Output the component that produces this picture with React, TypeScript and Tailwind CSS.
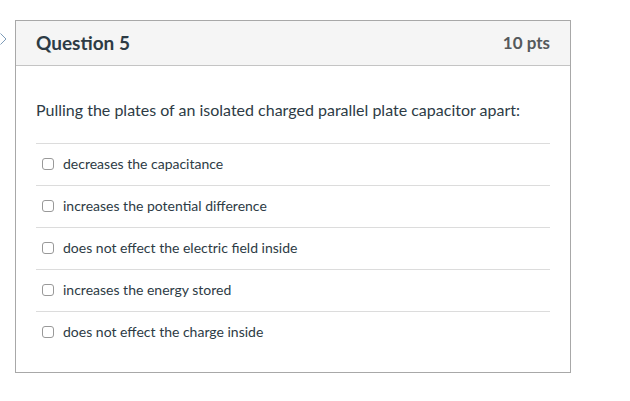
const ANSWERS = [
  "decreases the capacitance",
  "increases the potential difference",
  "does not effect the electric field inside",
  "increases the energy stored",
  "does not effect the charge inside",
];

export default function App() {
  return (
    <div
      className="relative w-[630px] h-[401px] bg-white text-[#2d3b45]"
      style={{ fontFamily: "Lato, 'Liberation Sans', sans-serif" }}
    >
      <svg
        className="absolute left-0 top-[33px]"
        width="7"
        height="12"
        viewBox="0 0 7 12"
      >
        <path d="M0.5 0.5 L6 6 L0.5 11.5" fill="none" stroke="#7d9bb8" strokeWidth="1" />
      </svg>
      <div className="absolute left-[15px] top-[20px] w-[556px] border border-[#a8a8a8]">
        <div className="h-[45px] bg-[#f5f5f5] border-b border-[#c4c4c4] px-[20px] flex items-center justify-between">
          <h2 className="text-[19px] font-bold">Question 5</h2>
          <span className="text-[17px] font-bold text-[#55595c]">10 pts</span>
        </div>
        <div className="px-[20px] pt-[32px] pb-[19px]">
          <p className="text-[16px] leading-[24px]">
            Pulling the plates of an isolated charged parallel plate capacitor apart:
          </p>
          <div className="mt-[21px]">
            {ANSWERS.map((a) => (
              <label
                key={a}
                className="h-[42px] border-t border-[#dcdcdc] flex items-center gap-[9px] pl-[6px] text-[14px] leading-[20px] pb-[1px]"
              >
                <span className="w-[12px] h-[12px] rounded-[3px] border border-[#999] bg-white" />
                {a}
              </label>
            ))}
          </div>
        </div>
      </div>
    </div>
  );
}
